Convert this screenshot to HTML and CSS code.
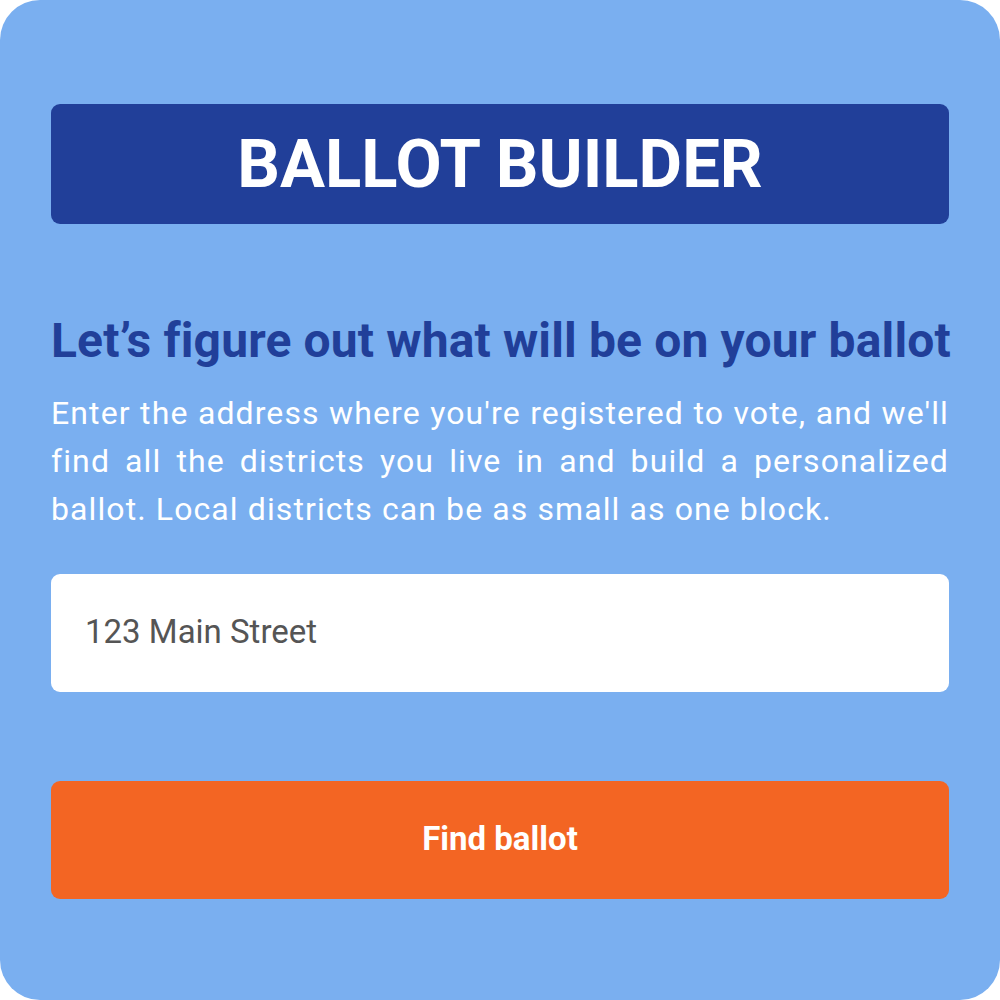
FILE: index.html
```html
<!DOCTYPE html>
<html lang="en">
<head>
<meta charset="utf-8">
<title>Ballot Builder</title>
<link rel="stylesheet" href="styles.css">
</head>
<body>
<main class="card">
  <header class="banner">
    <h1 class="banner-title">BALLOT BUILDER</h1>
  </header>
  <section class="intro">
    <h2 class="intro-heading">Let’s figure out what will be on your ballot</h2>
    <p class="intro-text">Enter the address where you're registered to vote, and we'll find all the districts you live in and build a personalized ballot. Local districts can be as small as one block.</p>
  </section>
  <form class="lookup">
    <input class="address-input" type="text" value="123 Main Street" aria-label="Address">
    <button class="find-button" type="button">Find ballot</button>
  </form>
</main>
</body>
</html>
```

FILE: styles.css
```css
* {
  box-sizing: border-box;
}

html,
body {
  margin: 0;
  padding: 0;
  background: #ffffff;
}

body {
  font-family: Roboto, "Liberation Sans", sans-serif;
}

.card {
  width: 1000px;
  height: 1000px;
  background: #7aaff0;
  border-radius: 40px;
  padding: 104px 51px 0;
  display: flex;
  flex-direction: column;
}

.banner {
  height: 120px;
  background: #213f99;
  border-radius: 9px;
  display: flex;
  align-items: center;
  justify-content: center;
}

.banner-title {
  margin: 0;
  color: #ffffff;
  font-size: 67px;
  font-weight: 700;
  line-height: 1;
}

.intro {
  margin-top: 87px;
}

.intro-heading {
  margin: 0;
  color: #213f99;
  font-size: 48px;
  font-weight: 700;
  line-height: 60px;
  letter-spacing: 0.14px;
  white-space: nowrap;
}

.intro-text {
  margin: 18px 0 0;
  color: #ffffff;
  font-size: 32px;
  line-height: 48px;
  letter-spacing: 1.1px;
  text-align: justify;
}

.lookup {
  margin-top: 41px;
  display: flex;
  flex-direction: column;
  gap: 89px;
}

.address-input {
  height: 118px;
  border: none;
  border-radius: 9px;
  background: #ffffff;
  padding: 0 34px 4px;
  font-family: Roboto, "Liberation Sans", sans-serif;
  font-size: 33px;
  color: #555555;
  outline: none;
}

.find-button {
  height: 118px;
  border: none;
  border-radius: 9px;
  background: #f36523;
  color: #ffffff;
  font-family: Roboto, "Liberation Sans", sans-serif;
  font-size: 33px;
  font-weight: 700;
  padding-bottom: 4px;
  cursor: pointer;
}
```
